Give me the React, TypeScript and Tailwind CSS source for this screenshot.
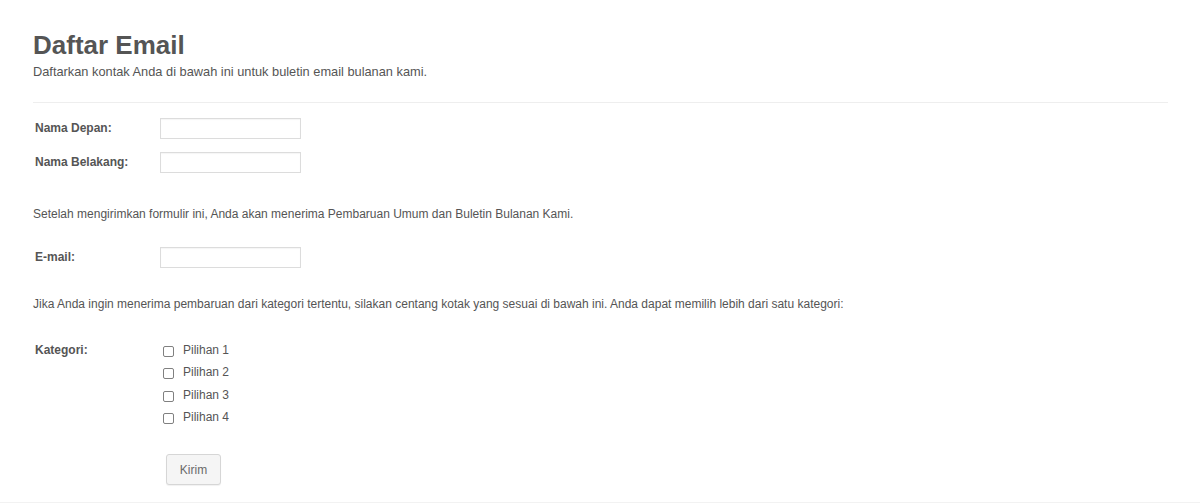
import React from 'react';

const font = { fontFamily: '"Liberation Sans", Arial, sans-serif' };

const Field: React.FC<{ label: string; className?: string }> = ({ label, className = '' }) => (
  <div className={`flex items-center h-[20px] ${className}`}>
    <label className="w-[127px] pl-[2px] text-[12px] font-bold text-[#555]">{label}</label>
    <input
      type="text"
      className="w-[141px] h-[21px] border border-[#dcdcdc] bg-white outline-none shadow-[inset_0_1px_1px_rgba(0,0,0,0.04)]"
    />
  </div>
);

export default function App() {
  const [checked, setChecked] = React.useState<boolean[]>([false, false, false, false]);

  return (
    <div className="w-full h-[504px] bg-white text-[#555] overflow-hidden" style={font}>
      <div className="h-[503px] border-b border-[#f2f2f2] pl-[33px] pr-[32px] pt-[30px]">
        {/* Header */}
        <h1 className="text-[26px] leading-[30px] font-bold text-[#555]">Daftar Email</h1>
        <p className="mt-[4px] text-[12.8px] leading-[16px] text-[#555]">
          Daftarkan kontak Anda di bawah ini untuk buletin email bulanan kami.
        </p>
        <div className="mt-[22px] h-px bg-[#eeeeee]" />

        {/* Names */}
        <Field label="Nama Depan:" className="mt-[15px]" />
        <Field label="Nama Belakang:" className="mt-[14px]" />

        <p className="mt-[34px] text-[12px] leading-[16px]">
          Setelah mengirimkan formulir ini, Anda akan menerima Pembaruan Umum dan Buletin Bulanan Kami.
        </p>

        <Field label="E-mail:" className="mt-[25px]" />

        <p className="mt-[29px] text-[12px] leading-[16px]">
          Jika Anda ingin menerima pembaruan dari kategori tertentu, silakan centang kotak yang sesuai di bawah ini. Anda dapat memilih lebih dari satu kategori:
        </p>

        {/* Categories */}
        <div className="mt-[27px] flex">
          <div className="w-[127px] pl-[2px] h-[22px] flex items-center text-[12px] font-bold">Kategori:</div>
          <div className="flex flex-col pl-[3px]">
            {checked.map((c, i) => (
              <label key={i} className="h-[22.5px] flex items-center gap-[9px] text-[12px] cursor-pointer">
                <input
                  type="checkbox"
                  checked={c}
                  onChange={() => setChecked(checked.map((v, j) => (j === i ? !v : v)))}
                  className="appearance-none w-[11px] h-[11px] mt-[2px] border border-[#808080] rounded-[2px] bg-white checked:bg-[#555]"
                />
                <span className="-mt-[1px]">Pilihan {i + 1}</span>
              </label>
            ))}
          </div>
        </div>

        <div className="mt-[25px] pl-[133px]">
          <button
            type="submit"
            className="w-[55px] h-[31px] border border-[#d6d6d6] rounded-[3px] bg-[#f5f5f5] text-[12px] text-[#6a6a6a] shadow-[0_1px_1px_rgba(0,0,0,0.06)]"
          >
            Kirim
          </button>
        </div>
      </div>
    </div>
  );
}
